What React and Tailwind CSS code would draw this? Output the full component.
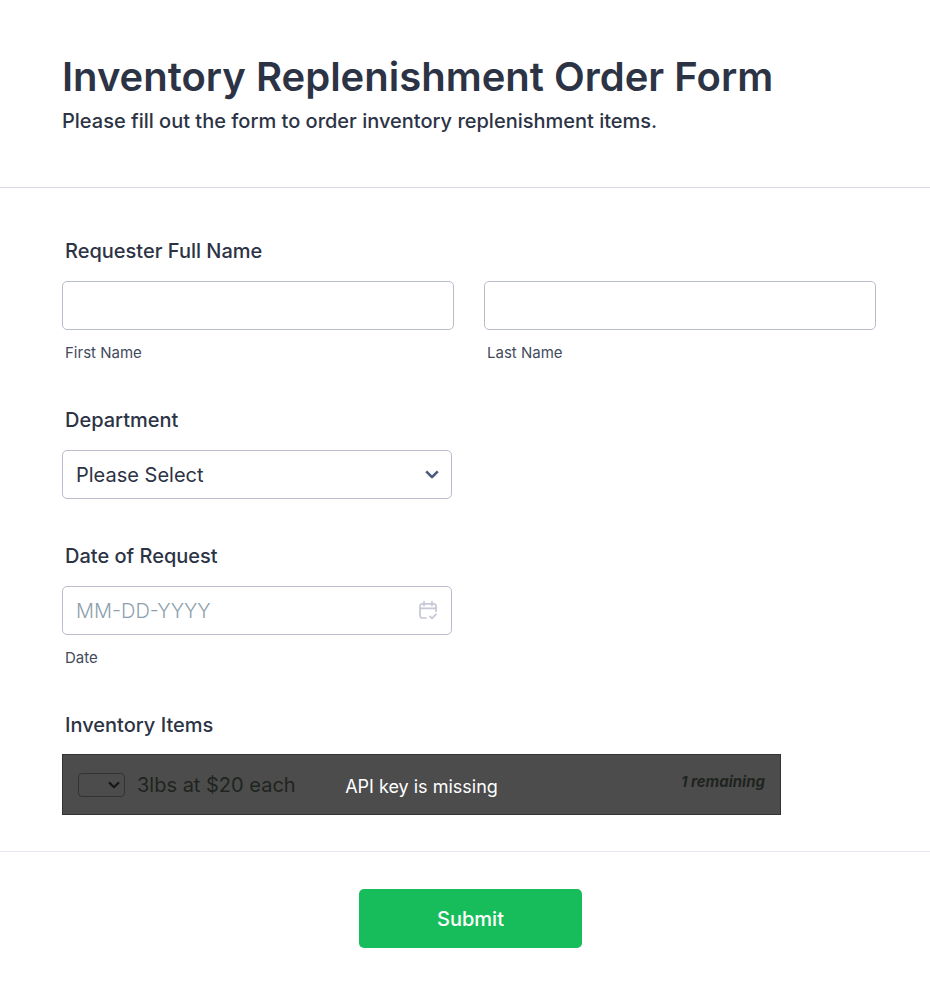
import React, { useState } from 'react';

const labelClass = "block pl-[3px] text-[20px] leading-6 font-medium text-[#2c3345]";
const subLabelClass = "block pl-[3px] mt-[13px] text-[15px] leading-5 text-[#434a5c]";
const fieldClass = "block w-full h-[49px] rounded-[5px] border border-[#b8bdc9] bg-white px-[13px] text-[20px] text-[#2c3345] outline-none focus:border-blue-500";

function ChevronIcon({ className }) {
  return (
    <svg viewBox="0 0 14 9" fill="none" stroke="currentColor" strokeWidth="2.6" strokeLinejoin="round" className={className} aria-hidden="true">
      <path d="M1.2 1.4 7 7.2l5.8-5.8" />
    </svg>
  );
}

function CalendarIcon({ className }) {
  return (
    <svg viewBox="0 0 20 20" fill="none" stroke="currentColor" strokeWidth="1.7" strokeLinecap="round" strokeLinejoin="round" className={className} aria-hidden="true">
      <path d="M8 18H4.200a2.200 2.200 0 0 1-2.200-2.200V6a2.200 2.200 0 0 1 2.200-2.200h11.600A2.200 2.200 0 0 1 18 6v5.500" />
      <path d="M2 8.300h16M6 1.500v4M14 1.500v4M12 16.300l2 2 4-4" />
    </svg>
  );
}

export default function App() {
  const [form, setForm] = useState({ first: '', last: '', department: '', date: '', quantity: '' });

  const handleChange = (e) => {
    setForm({ ...form, [e.target.name]: e.target.value });
  };

  return (
    <form onSubmit={(e) => e.preventDefault()} autoComplete="off" className="w-full bg-white font-['Inter',sans-serif] text-[#2c3345]">
      <header className="border-b border-[#d9dbe3] px-[62px] pt-[52px] pb-[54px]">
        <h1 className="text-[40px] leading-[50px] font-semibold">Inventory Replenishment Order Form</h1>
        <p className="mt-[7px] text-[20px] leading-6 font-medium">Please fill out the form to order inventory replenishment items.</p>
      </header>

      <div className="flex flex-col gap-[45px] pt-[51px] pr-[54px] pb-9 pl-[62px]">
        <fieldset>
          <legend className={labelClass}>Requester Full Name</legend>
          <div className="mt-[18px] grid grid-cols-2 gap-[30px]">
            <div>
              <input id="first" name="first" type="text" value={form.first} onChange={handleChange} className={fieldClass} />
              <label htmlFor="first" className={subLabelClass}>First Name</label>
            </div>
            <div>
              <input id="last" name="last" type="text" value={form.last} onChange={handleChange} className={fieldClass} />
              <label htmlFor="last" className={subLabelClass}>Last Name</label>
            </div>
          </div>
        </fieldset>

        <div className="w-full max-w-[390px]">
          <label htmlFor="department" className={labelClass}>Department</label>
          <div className="relative mt-[18px]">
            <select id="department" name="department" value={form.department} onChange={handleChange} className={`${fieldClass} appearance-none`}>
              <option value="">Please Select</option>
            </select>
            <ChevronIcon className="pointer-events-none absolute right-[13px] top-5 h-[9px] w-[14px] text-[#4a5a7f]" />
          </div>
        </div>

        <div className="w-full max-w-[390px]">
          <label htmlFor="date" className={labelClass}>Date of Request</label>
          <div className="relative mt-[18px]">
            <input id="date" name="date" type="text" placeholder="MM-DD-YYYY" value={form.date} onChange={handleChange} className={`${fieldClass} placeholder:font-light placeholder:text-[#8d9fae]`} />
            <CalendarIcon className="pointer-events-none absolute right-[14px] top-[14px] size-5 text-[#c5c8d6]" />
          </div>
          <label htmlFor="date" className={subLabelClass}>Date</label>
        </div>

        <div className="w-full max-w-[719px]">
          <h2 className={labelClass}>Inventory Items</h2>
          <div className="relative mt-[17px] flex h-[61px] items-center border border-[#333333] bg-[#4c4c4c] px-[15px] text-[#1f241f]">
            <div className="relative">
              <select id="quantity" name="quantity" value={form.quantity} onChange={handleChange} className="block h-6 w-[47px] appearance-none rounded-[4px] border border-[#333333] bg-transparent">
                <option value=""></option>
              </select>
              <ChevronIcon className="pointer-events-none absolute right-[5px] top-2 h-[8px] w-[12px] text-[#151a15]" />
            </div>
            <label htmlFor="quantity" className="ml-3 text-[20px] leading-6">3lbs at $20 each</label>
            <span className="ml-auto pb-[6px] text-[15px] leading-5 font-bold italic">1 remaining</span>
            <div role="alert" className="absolute inset-0 flex items-center justify-center pt-1 text-[18px] text-white">API key is missing</div>
          </div>
        </div>
      </div>

      <footer className="flex justify-center border-t border-[#e6e8f2] pt-[37px] pb-[50px] pl-[11px]">
        <button type="submit" className="h-[59px] w-[223px] rounded-[5px] bg-[#18bd5b] text-[20px] font-medium text-white hover:bg-[#16aa52]">Submit</button>
      </footer>
    </form>
  );
}
